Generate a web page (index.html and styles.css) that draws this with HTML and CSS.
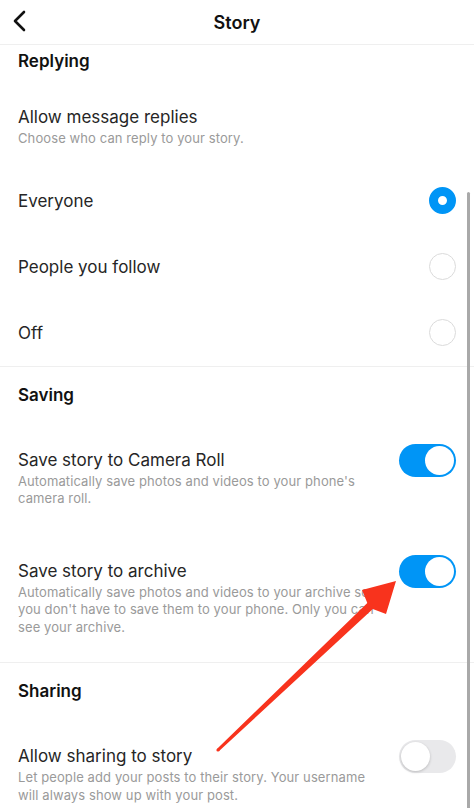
FILE: index.html
```html
<!DOCTYPE html>
<html lang="en">
<head>
    <meta charset="UTF-8">
    <meta name="viewport" content="width=device-width, initial-scale=1.0">
    <title>Story</title>
    <link rel="stylesheet" href="styles.css">
</head>
<body>

<div class="screen">
    <div class="topbar">
        <svg class="back" width="16" height="22" viewBox="0 0 16 22">
            <path d="M12 2 L3 11 L12 20" fill="none" stroke="#111" stroke-width="2.6" stroke-linecap="round" stroke-linejoin="round"/>
        </svg>
        <div class="topbar-title">Story</div>
    </div>

    <div class="section-head first">Replying</div>

    <div class="intro">
        <div class="row-title">Allow message replies</div>
        <div class="row-sub">Choose who can reply to your story.</div>
    </div>

    <div class="radio-row">
        <span>Everyone</span>
        <span class="radio checked"></span>
    </div>
    <div class="radio-row">
        <span>People you follow</span>
        <span class="radio"></span>
    </div>
    <div class="radio-row">
        <span>Off</span>
        <span class="radio"></span>
    </div>

    <div class="divider"></div>

    <div class="section-head">Saving</div>

    <div class="toggle-row">
        <div class="toggle-text">
            <div class="row-title">Save story to Camera Roll</div>
            <div class="row-sub">Automatically save photos and videos to your phone's<br>camera roll.</div>
        </div>
        <span class="switch on"></span>
    </div>
    <div class="toggle-row">
        <div class="toggle-text">
            <div class="row-title">Save story to archive</div>
            <div class="row-sub">Automatically save photos and videos to your archive so<br>you don't have to save them to your phone. Only you can<br>see your archive.</div>
        </div>
        <span class="switch on"></span>
    </div>

    <div class="divider"></div>

    <div class="section-head">Sharing</div>

    <div class="toggle-row">
        <div class="toggle-text">
            <div class="row-title">Allow sharing to story</div>
            <div class="row-sub">Let people add your posts to their story. Your username<br>will always show up with your post.</div>
        </div>
        <span class="switch"></span>
    </div>

    <!-- scroll indicator -->
    <div class="scrollbar"></div>

    <!-- red pointer onto the archive switch -->
    <svg class="pointer" width="474" height="808" viewBox="0 0 474 808">
        <polygon fill="#f8331d" points="216.9,748.9 367.3,603.1 362,590 396,581 386,614 372.8,608.9 219.1,751.1"/>
        <circle cx="218" cy="750" r="1.6" fill="#f8331d"/>
    </svg>
</div>

</body>
</html>
```

FILE: styles.css
```css
body {
    margin: 0;
    padding: 0;
    background-color: #fff;
    font-family: Inter, "Noto Sans", sans-serif;
    color: #262626;
}
.screen {
    position: relative;
    width: 474px;
    height: 808px;
    overflow: hidden;
    background-color: #fff;
}
.topbar {
    position: relative;
    height: 44px;
    border-bottom: 1px solid #efefef;
    display: flex;
    align-items: center;
    justify-content: center;
}
.back {
    position: absolute;
    left: 12px;
    top: 10px;
}
.topbar-title {
    font-size: 18px;
    font-weight: 600;
    color: #111;
}
.section-head {
    height: 56px;
    line-height: 56px;
    padding: 0 18px;
    font-size: 17px;
    font-weight: 600;
    color: #111;
}
.section-head.first {
    height: 33px;
    line-height: 33px;
}
.intro {
    padding: 28px 18px 20px;
}
.row-title {
    font-size: 17px;
    line-height: 22px;
    color: #262626;
}
.row-sub {
    margin-top: 2px;
    font-size: 13px;
    line-height: 17.5px;
    letter-spacing: 0.1px;
    color: #9a9a9a;
    white-space: nowrap;
}
.radio-row {
    height: 66px;
    padding: 0 18px;
    display: flex;
    align-items: center;
    justify-content: space-between;
    font-size: 17px;
}
.radio {
    width: 25px;
    height: 25px;
    border: 1.5px solid #dbdbdb;
    border-radius: 50%;
}
.radio.checked {
    width: 9px;
    height: 9px;
    border: 9.5px solid #0095f6;
    background-color: #fff;
}
.divider {
    height: 1px;
    background-color: #efefef;
}
.toggle-row {
    padding: 26px 18px;
    display: flex;
    align-items: flex-start;
    justify-content: space-between;
}
.toggle-text {
    flex: 1;
    min-width: 0;
}
.switch {
    position: relative;
    flex: none;
    width: 57px;
    height: 33px;
    margin-top: -5px;
    border-radius: 17px;
    background-color: #e9e9eb;
}
.switch::after {
    content: "";
    position: absolute;
    top: 2px;
    left: 2px;
    width: 29px;
    height: 29px;
    border-radius: 50%;
    background-color: #fff;
    box-shadow: 0 1px 3px rgba(0, 0, 0, 0.2);
}
.switch.on {
    background-color: #0095f6;
}
.switch.on::after {
    left: 26px;
    box-shadow: none;
}
.scrollbar {
    position: absolute;
    left: 467px;
    top: 192px;
    width: 3px;
    height: 620px;
    border-radius: 2px;
    background-color: #a9a9a9;
}
.pointer {
    position: absolute;
    left: 0;
    top: 0;
}
```
